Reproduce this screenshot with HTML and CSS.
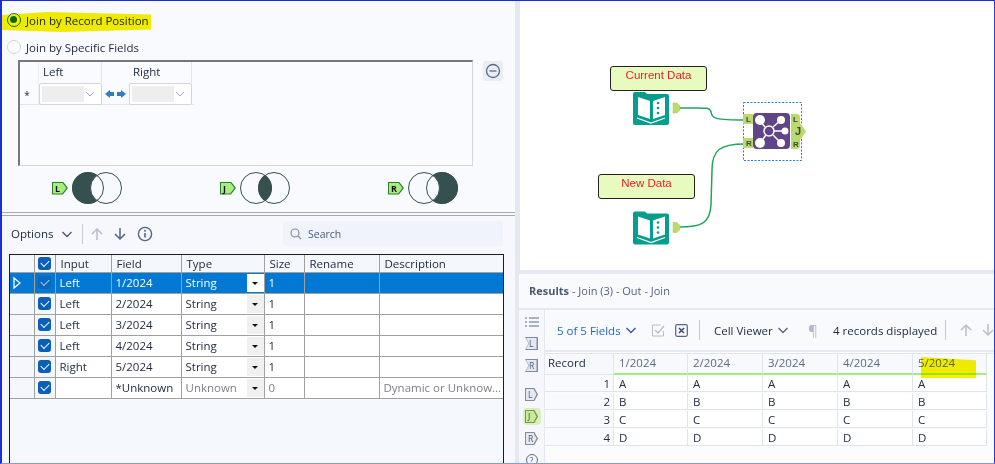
FILE: index.html
```html
<!DOCTYPE html>
<html lang="en">
<head>
<meta charset="utf-8">
<title>Join by Record Position</title>
<link rel="stylesheet" href="styles.css">
</head>
<body>
<div class="app">
  <section class="config">
    <div class="join-setup">
      <label class="radio-row"><span class="radio on"></span>Join by Record Position</label>
      <label class="radio-row second"><span class="radio"></span>Join by Specific Fields</label>
      <div class="field-row-wrap">
        <div class="join-grid">
          <div class="jg-head"><span class="jg-star"></span><span class="jg-name">Left</span><span class="jg-arrows"></span><span class="jg-name">Right</span></div>
          <div class="jg-row">
            <span class="jg-star">*</span>
            <span class="jg-select"><span class="jg-fill"></span><svg class="chev" width="12" height="12" viewBox="0 0 12 12"><path d="M2 4l4 4 4-4" fill="none" stroke="#aab" stroke-width="1"/></svg></span>
            <span class="jg-arrows"><svg width="21" height="10" viewBox="0 0 21 10"><path d="M0 5l5-4v2h4v4H5v2z" fill="#2f7fc4"/><path d="M21 5l-5-4v2h-4v4h4v2z" fill="#2f7fc4"/></svg></span>
            <span class="jg-select"><span class="jg-fill"></span><svg class="chev" width="12" height="12" viewBox="0 0 12 12"><path d="M2 4l4 4 4-4" fill="none" stroke="#aab" stroke-width="1"/></svg></span>
          </div>
        </div>
        <span class="minus-btn"><svg width="16" height="16" viewBox="0 0 16 16"><circle cx="8" cy="8" r="6.5" fill="none" stroke="#5c6a85" stroke-width="1.3"/><path d="M4.5 8h7" stroke="#5c6a85" stroke-width="1.3"/></svg></span>
      </div>
      <div class="venn-row">
        <div class="venn-item">
          <span class="tag">L</span>
          <svg width="50" height="34" viewBox="0 0 50 34"><circle cx="16" cy="17" r="16" fill="#36504f"/><circle cx="34" cy="17" r="15.5" fill="#f7f9fd" stroke="#36504f"/><circle cx="16" cy="17" r="15.500" fill="none" stroke="#36504f"/></svg>
        </div>
        <div class="venn-item">
          <span class="tag">J</span>
          <svg width="50" height="34" viewBox="0 0 50 34"><defs><clipPath id="vc"><circle cx="16" cy="17" r="16"/></clipPath></defs><circle cx="16" cy="17" r="15.5" fill="none" stroke="#36504f"/><circle cx="34" cy="17" r="15.5" fill="none" stroke="#36504f"/><circle cx="34" cy="17" r="16" fill="#36504f" clip-path="url(#vc)"/></svg>
        </div>
        <div class="venn-item">
          <span class="tag">R</span>
          <svg width="50" height="34" viewBox="0 0 50 34"><circle cx="34" cy="17" r="16" fill="#36504f"/><circle cx="16" cy="17" r="15.5" fill="#f7f9fd" stroke="#36504f"/><circle cx="34" cy="17" r="15.500" fill="none" stroke="#36504f"/></svg>
        </div>
      </div>
    </div>
    <div class="options-bar">
      <span class="options-label">Options</span>
      <svg class="opt-chev" width="12" height="12" viewBox="0 0 12 12"><path d="M1.5 4l4.5 4.5L10.500 4" fill="none" stroke="#4a5a78" stroke-width="1.4"/></svg>
      <span class="vsep"></span>
      <svg class="arrow-a" width="14" height="14" viewBox="0 0 14 14"><path d="M7 13V2M2 7l5-5 5 5" fill="none" stroke="#b8bec9" stroke-width="1.5"/></svg>
      <svg class="arrow-b" width="14" height="14" viewBox="0 0 14 14"><path d="M7 1v11M2 7l5 5 5-5" fill="none" stroke="#54648a" stroke-width="1.5"/></svg>
      <svg class="info" width="16" height="16" viewBox="0 0 16 16"><circle cx="8" cy="8" r="6.600" fill="none" stroke="#54648a" stroke-width="1.400"/><path d="M8 7v4.500" stroke="#54648a" stroke-width="1.600"/><circle cx="8" cy="4.800" r="1" fill="#54648a"/></svg>
      <div class="search">
        <svg width="12" height="12" viewBox="0 0 12 12"><circle cx="5" cy="5" r="4" fill="none" stroke="#7d8ba6" stroke-width="1.100"/><path d="M8 8l3 3" stroke="#7d8ba6" stroke-width="1.100"/></svg>
        <span>Search</span>
      </div>
    </div>
    <div class="table-wrap">
      <table class="fields">
        <colgroup><col class="c-a"><col class="c-b"><col class="c-c"><col class="c-d"><col class="c-e"><col class="c-f"><col class="c-g"><col class="c-h"></colgroup>
        <thead>
          <tr><th></th><th class="chk"><span class="box"></span></th><th>Input</th><th>Field</th><th>Type</th><th>Size</th><th>Rename</th><th>Description</th></tr>
        </thead>
        <tbody>
          <tr class="sel"><td class="mark"><svg width="8" height="12" viewBox="0 0 8 12"><path d="M1 1l6 5-6 5z" fill="#0078d4" stroke="#fff" stroke-width="1.300"/></svg></td><td class="chk"><span class="box"></span></td><td>Left</td><td>1/2024</td><td class="ty">String<span class="dd"></span></td><td>1</td><td></td><td></td></tr>
          <tr><td></td><td class="chk"><span class="box"></span></td><td>Left</td><td>2/2024</td><td class="ty">String<span class="dd"></span></td><td>1</td><td></td><td></td></tr>
          <tr><td></td><td class="chk"><span class="box"></span></td><td>Left</td><td>3/2024</td><td class="ty">String<span class="dd"></span></td><td>1</td><td></td><td></td></tr>
          <tr><td></td><td class="chk"><span class="box"></span></td><td>Left</td><td>4/2024</td><td class="ty">String<span class="dd"></span></td><td>1</td><td></td><td></td></tr>
          <tr><td></td><td class="chk"><span class="box"></span></td><td>Right</td><td>5/2024</td><td class="ty">String<span class="dd"></span></td><td>1</td><td></td><td></td></tr>
          <tr class="unk"><td></td><td class="chk"><span class="box"></span></td><td></td><td class="dark">*Unknown</td><td class="ty">Unknown<span class="dd"></span></td><td>0</td><td></td><td>Dynamic or Unknow...</td></tr>
        </tbody>
      </table>
    </div>
  </section>

  <section class="right">
    <div class="canvas">
      <svg class="wires" width="475" height="270" viewBox="520 0 475 270">
        <path d="M680 108C705 108 710 107 711 112C712 119 716 120 745 120" fill="none" stroke="#1fa45c" stroke-width="1.500"/>
        <path d="M680 227C700 227 710 224 711 205L712 170C712 150 720 144 745 144" fill="none" stroke="#1fa45c" stroke-width="1.500"/>
        <g>
          <path d="M633 94a2 2 0 0 1 2-2h10l2 2h20a2 2 0 0 1 2 2v27a2 2 0 0 1-2 2h-32a2 2 0 0 1-2-2z" fill="#079d8c"/>
          <path d="M638 97l12 4v18l-12-4zM653 101l12-4v18l-12 4z" fill="#fff"/>
          <path d="M637 118l14 5 14-5" fill="none" stroke="#fff" stroke-width="1.300"/>
          <circle cx="658" cy="103" r="1.300" fill="#079d8c"/><circle cx="658" cy="108" r="1.300" fill="#079d8c"/><circle cx="658" cy="113" r="1.300" fill="#079d8c"/>
          <path d="M673 103h4l3 3v4l-3 3h-4z" fill="#bcd96b" stroke="#a9c85c" stroke-width=".5"/>
        </g>
        <g transform="translate(0 119.500)">
          <path d="M633 94a2 2 0 0 1 2-2h10l2 2h20a2 2 0 0 1 2 2v27a2 2 0 0 1-2 2h-32a2 2 0 0 1-2-2z" fill="#079d8c"/>
          <path d="M638 97l12 4v18l-12-4zM653 101l12-4v18l-12 4z" fill="#fff"/>
          <path d="M637 118l14 5 14-5" fill="none" stroke="#fff" stroke-width="1.300"/>
          <circle cx="658" cy="103" r="1.300" fill="#079d8c"/><circle cx="658" cy="108" r="1.300" fill="#079d8c"/><circle cx="658" cy="113" r="1.300" fill="#079d8c"/>
          <path d="M673 103h4l3 3v4l-3 3h-4z" fill="#bcd96b" stroke="#a9c85c" stroke-width=".5"/>
        </g>
        <rect x="743.500" y="102.500" width="58" height="58" fill="none" stroke="#1f80d8" stroke-dasharray="2 1.500"/>
        <rect x="743" y="114" width="10" height="10" fill="#bcd96b"/>
        <rect x="743" y="138" width="10" height="10" fill="#bcd96b"/>
        <path d="M791 114h7l2 2v8h-9zM791 139h9v8l-2 2h-7z" fill="#bcd96b"/>
        <path d="M791 124h10l5 7.500-5 7.500h-10z" fill="#bcd96b"/>
        <rect x="753" y="113" width="37" height="36" rx="4" fill="#5f4488"/>
        <g stroke="#fff" stroke-width="1.500" fill="none"><circle cx="769" cy="131" r="5"/><path d="M760 121l5 6M781 120l-8 7M785 131h-11M781 143l-8-8M760 143l6-8"/></g>
        <g fill="#fff"><circle cx="760" cy="120" r="5"/><circle cx="781" cy="120" r="4"/><circle cx="785" cy="131" r="3.500"/><circle cx="781" cy="143" r="4"/><circle cx="760" cy="143" r="5"/></g>
        <g class="anchor-text"><text x="746" y="122">L</text><text x="746" y="146">R</text><text x="793" y="122">L</text><text x="793" y="147">R</text><text class="big" x="795" y="135">J</text></g>
      </svg>
      <div class="comment c1">Current Data</div>
      <div class="comment c2">New Data</div>
    </div>
    <div class="results">
      <div class="results-title"><b>Results</b> - Join (3) - Out - Join</div>
      <div class="results-body">
        <nav class="rail">
          <svg width="14" height="12" viewBox="0 0 14 12"><path d="M0 2h2M4 2h10M0 6h2M4 6h10M0 10h2M4 10h10" stroke="#5c6a85" stroke-width="1"/></svg>
          <span class="ra in">L</span>
          <span class="ra in">R</span>
          <span class="rail-sep"></span>
          <span class="ra">L</span>
          <span class="ra-active"><span class="ra active">J</span></span>
          <span class="ra">R</span>
          <span class="help">?</span>
        </nav>
        <div class="results-main">
          <div class="res-toolbar">
            <span class="fields-link">5 of 5 Fields</span>
            <svg width="12" height="12" viewBox="0 0 12 12"><path d="M1.500 4l4.500 4.500L10.500 4" fill="none" stroke="#3e5a8a" stroke-width="1.400"/></svg>
            <svg class="t-check" width="13" height="13" viewBox="0 0 13 13"><path d="M11.500 7v5h-11V1h8" fill="none" stroke="#b5bbc6"/><path d="M3 6l3 3 6-7" fill="none" stroke="#b5bbc6" stroke-width="1.200"/></svg>
            <svg class="t-x" width="13" height="13" viewBox="0 0 13 13"><rect x=".7" y=".7" width="11.600" height="11.600" rx="1.500" fill="none" stroke="#54648a" stroke-width="1.200"/><path d="M4 4l5 5M9 4l-5 5" stroke="#3d4c70" stroke-width="1.600"/></svg>
            <span class="vsep t-sep"></span>
            <span class="cell-viewer">Cell Viewer</span>
            <svg width="12" height="12" viewBox="0 0 12 12"><path d="M1.500 4l4.500 4.500L10.500 4" fill="none" stroke="#54648a" stroke-width="1.400"/></svg>
            <span class="pilcrow">¶</span>
            <span class="rec-count">4 records displayed</span>
            <span class="vsep r-sep"></span>
            <svg class="t-up" width="14" height="14" viewBox="0 0 14 14"><path d="M7 13V2M2 7l5-5 5 5" fill="none" stroke="#b8bec9" stroke-width="1.500"/></svg>
            <svg class="t-down" width="14" height="14" viewBox="0 0 14 14"><path d="M7 1v11M2 7l5 5 5-5" fill="none" stroke="#b8bec9" stroke-width="1.500"/></svg>
          </div>
          <div class="grid">
            <div class="g-row g-head"><span class="g-rec">Record</span><span>1/2024</span><span>2/2024</span><span>3/2024</span><span>4/2024</span><span>5/2024</span></div>
            <div class="g-row"><span class="g-num">1</span><span>A</span><span>A</span><span>A</span><span>A</span><span>A</span></div>
            <div class="g-row"><span class="g-num">2</span><span>B</span><span>B</span><span>B</span><span>B</span><span>B</span></div>
            <div class="g-row"><span class="g-num">3</span><span>C</span><span>C</span><span>C</span><span>C</span><span>C</span></div>
            <div class="g-row"><span class="g-num">4</span><span>D</span><span>D</span><span>D</span><span>D</span><span>D</span></div>
          </div>
        </div>
      </div>
    </div>
  </section>
  <span class="hl hl-top"></span>
  <span class="hl hl-col"></span>
</div>
</body>
</html>
```

FILE: styles.css
```css
* { box-sizing: border-box; }
html, body { margin: 0; padding: 0; }
body { width: 995px; height: 464px; overflow: hidden; font-family: "Open Sans", "Noto Sans", sans-serif; font-size: 11.500px; color: #222c44; background: #e3e8f1; }
svg { display: block; flex: none; }

.app { position: relative; display: flex; width: 995px; height: 464px; border-top: 1px solid #1a2fd8; border-left: 2px solid #1a2fd8; border-right: 1px solid #2a3fd0; border-bottom: 1px solid #8c93e8; gap: 4px; overflow: hidden; }

/* left configuration pane */
.config { width: 513px; flex: none; display: flex; flex-direction: column; background: #f6f8fd; }
.join-setup { height: 212px; padding-top: 10px; background: #f8fafe; border-bottom: 1px solid #a9a9a9; }
.radio-row { display: flex; align-items: center; gap: 5px; height: 18px; padding-left: 5px; }
.radio-row.second { margin-top: 9px; }
.radio { width: 14px; height: 14px; border-radius: 50%; border: 1.500px solid #ccd6e4; background: #fff; flex: none; }
.radio.on { border-color: #126f78; background: #fff; position: relative; }
.radio.on::after { content: ""; position: absolute; left: 2px; top: 2px; width: 7px; height: 7px; border-radius: 50%; background: #0f6b1e; }

.field-row-wrap { display: flex; align-items: flex-start; margin-top: 4px; padding-left: 16px; }
.join-grid { width: 455px; height: 106px; background: #fafbfe; border: 1px solid #d4d6da; border-top: 2px solid #777; border-left: 2px solid #777; }
.jg-head, .jg-row { display: flex; align-items: stretch; width: 174px; }
.jg-head { height: 21px; line-height: 20px; }
.jg-row { height: 22px; border-bottom: 1px solid #e2e5ea; }
.jg-star { width: 19px; display: flex; align-items: center; justify-content: center; flex: none; padding: 3px 4px 0 0; font-size: 10px; border-right: 1px solid #eceef2; }
.jg-name { width: 63px; padding-left: 4px; flex: none; border-right: 1px solid #e2e5ea; }
.jg-arrows { width: 27px; flex: none; display: flex; align-items: center; justify-content: center; }
.jg-select { width: 63px; flex: none; height: 22px; display: flex; align-items: center; justify-content: space-between; padding: 2px 5px 2px 2px; background: #fff; border: 1px solid #d2d5da; border-radius: 2px; }
.jg-fill { width: 42px; height: 16px; background: #eeeeee; }
.minus-btn { margin: 1px 0 0 10px; width: 20px; height: 20px; display: flex; align-items: center; justify-content: center; background: #e9edf4; border-radius: 3px; }

.venn-row { display: flex; gap: 98px; padding: 5px 0 0 50px; }
.venn-item { width: 70px; display: flex; align-items: center; gap: 4px; }
.tag { position: relative; flex: none; width: 16px; height: 13px; font-size: 9px; font-weight: 700; line-height: 13px; padding-left: 3px; color: #111; background: #2e7d32; clip-path: polygon(0 0, 68% 0, 100% 50%, 68% 100%, 0 100%); }
.tag::before { content: ""; position: absolute; z-index: -1; inset: 1px 1.500px 1px 1px; background: #a6ef7c; clip-path: polygon(0 0, 68% 0, 100% 50%, 68% 100%, 0 100%); }

.options-bar { height: 36px; margin-top: 2px; border-top: 1px solid #a9a9a9; display: flex; align-items: center; padding-left: 9px; background: #f6f8fd; }
.options-label { width: 42px; }
.opt-chev { margin-left: 8px; }
.vsep { width: 1px; height: 20px; background: #c3c9d3; flex: none; }
.options-bar .vsep { margin-left: 9px; }
.arrow-a { margin-left: 7px; }
.arrow-b { margin-left: 9px; }
.info { margin-left: 10px; }
.search { margin-left: 130px; width: 220px; height: 25px; background: #f0f3f9; border-radius: 3px; display: flex; align-items: center; gap: 6px; padding-left: 7px; font-size: 10.500px; color: #4c5a78; }

.table-wrap { flex: 1; margin: 3px 0 0 7px; width: 495px; border: 1px solid #1c1c1c; border-bottom: 0; background: #f5f8fd; }
.fields { table-layout: fixed; border-collapse: collapse; width: 493px; }
.c-a { width: 24px; } .c-b { width: 21px; } .c-c { width: 56px; } .c-d { width: 70px; } .c-e { width: 83px; } .c-f { width: 40px; } .c-g { width: 75px; } .c-h { width: 124px; }
.fields th, .fields td { border: 1px solid #a0a0a0; padding: 0 0 0 4px; white-space: nowrap; overflow: hidden; text-align: left; font-weight: 400; }
.fields thead th { height: 17px; border-top: 0; background: #f4f7fb; padding-left: 5px; }
.fields tr > :first-child { border-left: 0; }
.fields tr > :last-child { border-right: 0; }
.fields td { height: 21px; background: #fff; }
.fields td:first-child { background: #f4f7fb; }
.fields th.chk, .fields td.chk { padding: 0 0 0 3px; background: #f4f7fb; }
.box { display: block; width: 13px; height: 13px; border-radius: 3px; background: #0b5fb8; position: relative; }
.box::after { content: ""; position: absolute; left: 3px; top: 3px; width: 7px; height: 4px; border-left: 1px solid #fff; border-bottom: 1px solid #fff; transform: rotate(-45deg); }
.sel td, .sel td:first-child, .sel td.chk { background: #0078d4; color: #fff; }
.sel .box { background: #0a68bd; }
.sel .box::after { border-color: #a9cdf0; }
.mark { padding-left: 3px !important; }
.ty { position: relative; }
.dd { position: absolute; right: 0; top: 1px; bottom: 1px; width: 17px; background: #f0f0f0; }
.dd::after { content: ""; position: absolute; left: 5px; top: 8px; border: 3px solid transparent; border-top: 3px solid #111; border-bottom: 0; }
.sel .dd { background: #fff; }
.unk td { color: #7c7f88; }
.unk td.dark { color: #222c44; }

/* right side */
.right { flex: 1; display: flex; flex-direction: column; gap: 4px; min-width: 0; }
.canvas { position: relative; height: 269px; background: #fff; flex: none; margin-left: 1px; }
.wires { position: absolute; left: 0; top: -1px; }
.anchor-text text { font: 700 8px "Liberation Sans", sans-serif; fill: #2f4a46; }
.anchor-text text.big { font-size: 11px; }
.comment { position: absolute; width: 97px; height: 25px; text-align: center; padding-top: 1px; background: #e6fbbd; border: 1px solid #222; border-radius: 3px; color: #ee1a2e; font: 11.500px/15px "Liberation Sans", sans-serif; }
.c1 { left: 90px; top: 65px; }
.c2 { left: 78px; top: 173px; }

.results { flex: 1; display: flex; flex-direction: column; gap: 2px; min-height: 0; margin-left: 0; }
.results-title { height: 34px; flex: none; padding: 10px 0 0 10px; font-size: 11px; line-height: 14px; color: #55647f; background: #f8fafe; }
.results-title b { font-weight: 700; color: #4e5a70; }
.results-body { flex: 1; display: flex; gap: 1px; min-height: 0; }
.rail { width: 25px; flex: none; display: flex; flex-direction: column; align-items: center; padding-top: 6px; background: #f5f7fc; }
.ra { position: relative; flex: none; width: 13px; height: 13px; margin-top: 9px; font-size: 8.500px; line-height: 13px; padding-left: 3px; color: #4d5a78; background: #7f8ba3; clip-path: polygon(0 0, 72% 0, 100% 50%, 72% 100%, 0 100%); }
.ra::before { content: ""; position: absolute; z-index: -1; inset: 1px 1.500px 1px 1px; background: #e3e8f1; clip-path: polygon(0 0, 72% 0, 100% 50%, 72% 100%, 0 100%); }
.ra.in { padding-left: 4px; clip-path: polygon(0 0, 100% 0, 100% 100%, 0 100%, 28% 50%); }
.ra.in::before { clip-path: polygon(0 0, 100% 0, 100% 100%, 0 100%, 28% 50%); }
.ra-active { flex: none; width: 18px; height: 17px; margin: 7px 0 -2px; display: flex; align-items: center; justify-content: center; background: #d9efbe; border-radius: 4px; }
.ra.active { margin: 0; color: #2c4c2a; background: #6f9a4a; }
.ra.active::before { background: #c9ea9c; }
.rail-sep { width: 17px; height: 1px; background: #d8dde6; margin-top: 8px; margin-bottom: -1px; }
.help { width: 12px; height: 12px; margin-top: 9px; border: 1px solid #5c6a85; border-radius: 50%; font-size: 9px; line-height: 11px; text-align: center; color: #5c6a85; }

.results-main { flex: 1; min-width: 0; background: #fbfcfe; }
.res-toolbar { height: 42px; display: flex; align-items: center; padding-left: 12px; background: #f8fafe; border-bottom: 2px solid #e3e8f1; }
.fields-link { color: #1f66c1; width: 62px; white-space: nowrap; margin-right: 6px; }
.t-check { margin-left: 15px; }
.t-x { margin-left: 10px; }
.t-sep { margin-left: 11px; }
.cell-viewer { margin-left: 14px; width: 56px; white-space: nowrap; margin-right: 7px; }
.pilcrow { margin-left: 19px; font-size: 15px; color: #b5bbc6; width: 8px; }
.rec-count { margin-left: 17px; width: 101px; white-space: nowrap; }
.r-sep { margin-left: 11px; }
.t-up { margin-left: 13px; }
.t-down { margin-left: 8px; }

.grid { padding-top: 1px; }
.g-row { display: grid; grid-template-columns: 69px 74px 75px 75px 75px 74px; height: 18px; }
.g-row span { height: 17px; line-height: 17px; padding-left: 5px; background: #fff; border-right: 1px solid #dfe4ee; border-bottom: 1px solid #dfe4ee; }
.g-head { height: 22px; border-top: 1px solid #dfe4ee; }
.g-head span { height: 21px; line-height: 18px; background: #f7f9fd; color: #5e6a84; border-bottom: 2px solid #a0ee7c; padding-left: 5px; }
.g-head .g-rec { background: #f6f8fc; color: #222c44; padding-left: 3px; border-bottom: 1px solid #dfe4ee; }
.g-row .g-num { text-align: right; padding-right: 3px; background: #f8fafd; }

/* marker highlights lying over the content */
.hl { position: absolute; mix-blend-mode: multiply; background: #f6f000; }
.hl-top { left: 0; top: 11px; width: 149px; height: 20px; clip-path: polygon(0 15%, 30% 0, 100% 12%, 100% 88%, 40% 100%, 0 90%); }
.hl-col { left: 919px; top: 356px; width: 55px; height: 21px; clip-path: polygon(0 0, 100% 15%, 100% 100%, 0 100%); }
```
